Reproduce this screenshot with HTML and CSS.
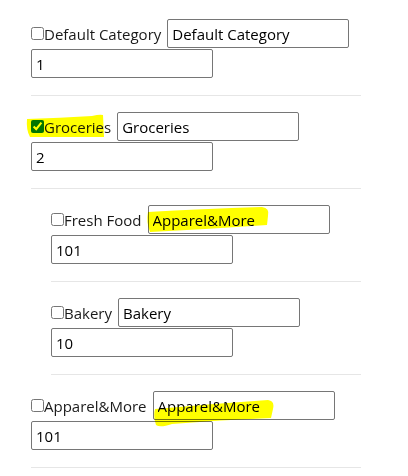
FILE: index.html
```html
<!DOCTYPE html>
<html>
<head>
<meta charset="utf-8">
<link rel="stylesheet" href="styles.css">
</head>
<body>
<div class="tree">
  <div class="item">
    <div class="row">
      <label class="name"><input type="checkbox" class="check">Default Category</label>
      <input class="field" type="text" value="Default Category">
    </div>
    <input class="field" type="text" value="1">
  </div>
  <div class="item">
    <div class="row">
      <label class="name"><input type="checkbox" class="check" checked>Groceries</label>
      <input class="field" type="text" value="Groceries">
    </div>
    <input class="field" type="text" value="2">
  </div>
  <div class="item child">
    <div class="row">
      <label class="name"><input type="checkbox" class="check">Fresh Food</label>
      <input class="field" type="text" value="Apparel&amp;More">
    </div>
    <input class="field" type="text" value="101">
  </div>
  <div class="item child">
    <div class="row">
      <label class="name"><input type="checkbox" class="check">Bakery</label>
      <input class="field" type="text" value="Bakery">
    </div>
    <input class="field" type="text" value="10">
  </div>
  <div class="item">
    <div class="row">
      <label class="name"><input type="checkbox" class="check">Apparel&amp;More</label>
      <input class="field" type="text" value="Apparel&amp;More">
    </div>
    <input class="field" type="text" value="101">
  </div>
</div>
<svg class="marker" width="408" height="476" viewBox="0 0 408 476">
  <path d="M27 119 Q60 118 92 116 Q100 114 103 115 L104 137 Q70 137 30 137 Q26 130 27 119 Z"/>
  <path d="M148 212 Q200 209 262 207 Q270 208 268 216 L267 225 Q210 229 150 232 Q146 222 148 212 Z"/>
  <path d="M155 409 Q210 404 268 400 Q275 401 273 409 L271 418 Q220 420 172 424 Q160 428 156 425 Q153 416 155 409 Z"/>
</svg>
</body>
</html>
```
FILE: styles.css
```css
html, body {
  margin: 0;
  padding: 0;
  background: #ffffff;
}

body {
  font-family: "Open Sans", "Noto Sans", sans-serif;
  font-size: 15px;
  color: #1a1a1a;
}

.tree {
  width: 330px;
  margin-left: 31px;
  padding-top: 3px;
}

.item {
  padding: 16px 0 17px;
  border-bottom: 1px solid #e6e6e6;
}

.item.child {
  margin-left: 20px;
}

.row {
  display: flex;
  align-items: center;
  height: 29px;
  margin-bottom: 1px;
}

.name {
  display: flex;
  align-items: center;
  white-space: nowrap;
}

.check {
  width: 13px;
  height: 13px;
  margin: 0;
}

.field {
  display: block;
  box-sizing: border-box;
  width: 182px;
  height: 29px;
  margin: 0;
  padding: 0 4px;
  border: 1px solid #767676;
  border-radius: 2px;
  font-family: "Open Sans", "Noto Sans", sans-serif;
  font-size: 15px;
  color: #000000;
  background: #ffffff;
}

.row .field {
  margin-left: 6px;
}

.marker {
  position: absolute;
  left: 0;
  top: 0;
  pointer-events: none;
  mix-blend-mode: multiply;
}

.marker path {
  fill: #ffff00;
}
```
